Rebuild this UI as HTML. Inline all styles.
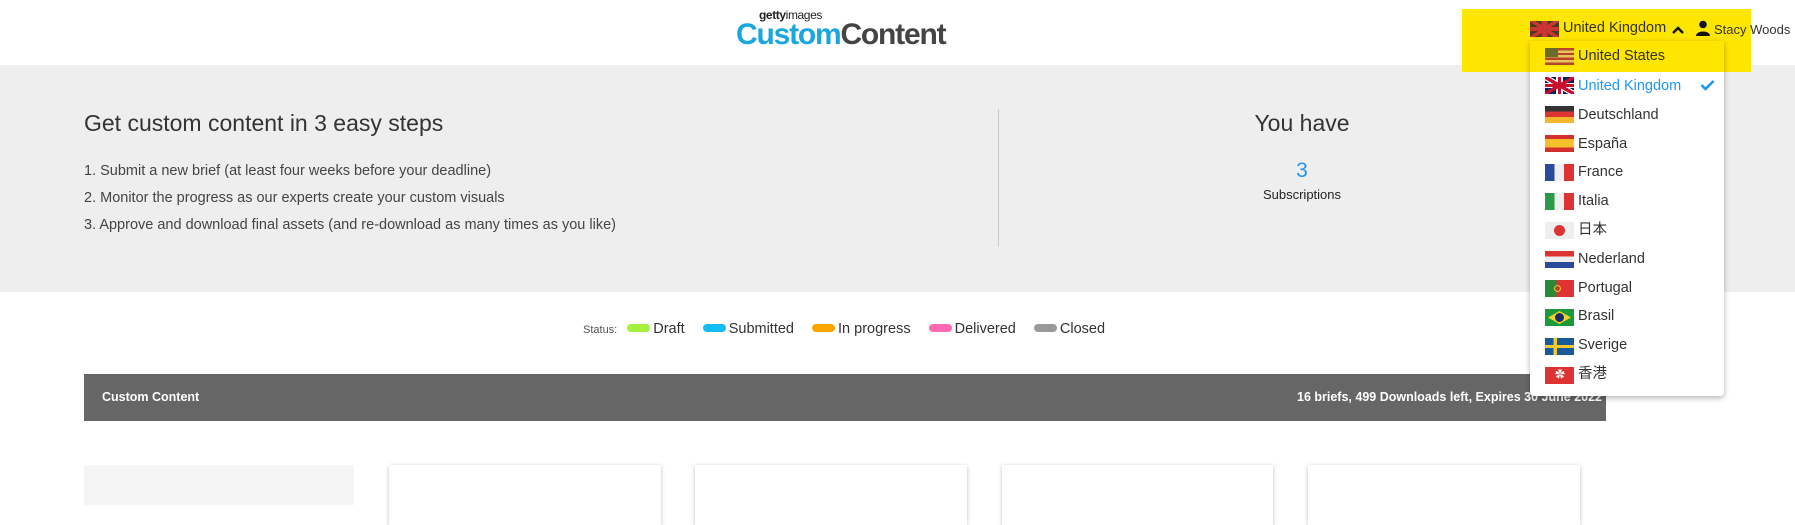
<!DOCTYPE html>
<html><head><meta charset="utf-8"><style>
*{margin:0;padding:0;box-sizing:border-box}
body{width:1795px;height:504px;overflow:hidden;background:#fff;font-family:"Liberation Sans","Noto Sans CJK JP",sans-serif;color:#333;position:relative}
.a{position:absolute;white-space:nowrap}
.gray{position:absolute;left:0;top:65px;width:1795px;height:227px;background:#eee}
.flag{position:absolute;width:29px;height:17px;overflow:hidden}
.item{position:absolute;left:1578px;font-size:14.5px;color:#333;line-height:18px}
.card{position:absolute;top:465px;height:60px;background:#fff;box-shadow:0 1px 4px rgba(0,0,0,.25)}
.dot{display:inline-block;width:23px;height:8px;border-radius:4px;margin-right:3px;vertical-align:1px}
</style></head><body>
<div class="a" style="left:759px;top:9px;font-size:12px;font-weight:bold;color:#222;letter-spacing:-.4px;line-height:13px">getty<span style="font-weight:normal">images</span></div>
<div class="a" style="left:736px;top:20px;font-size:30px;font-weight:bold;letter-spacing:-1.2px;line-height:30px"><span style="color:#1aa6df">Custom</span><span style="color:#444">Content</span></div>

<div class="gray"></div>
<div class="a" style="left:84px;top:110px;font-size:23px;color:#333">Get custom content in 3 easy steps</div>
<div class="a" style="left:84px;top:158px;font-size:14.5px;color:#444;line-height:27px">1. Submit a new brief (at least four weeks before your deadline)<br>2. Monitor the progress as our experts create your custom visuals<br>3. Approve and download final assets (and re-download as many times as you like)</div>
<div class="a" style="left:998px;top:109px;width:1px;height:138px;background:#ccc"></div>
<div class="a" style="left:1202px;width:200px;text-align:center;top:110px;font-size:23px;color:#333">You have</div>
<div class="a" style="left:1202px;width:200px;text-align:center;top:159px;font-size:21px;color:#2196f3">3</div>
<div class="a" style="left:1202px;width:200px;text-align:center;top:187px;font-size:13px;color:#222">Subscriptions</div>

<div class="a" style="left:583px;top:321px;font-size:14.5px;color:#333"><span style="font-size:11px;color:#555;margin-right:10px">Status:</span><span class="dot" style="background:#a4f13c"></span>Draft <span class="dot" style="background:#10bdf5;margin-left:14px"></span>Submitted <span class="dot" style="background:#ffa500;margin-left:14px"></span>In progress <span class="dot" style="background:#ff69b4;margin-left:14px"></span>Delivered <span class="dot" style="background:#999;margin-left:14px"></span>Closed</div>

<div class="a" style="left:84px;top:374px;width:1522px;height:47px;background:#666"></div>
<div class="a" style="left:102px;top:390px;font-size:12.5px;font-weight:bold;color:#fff">Custom Content</div>
<div class="a" style="left:1297px;width:290px;text-align:right;top:390px;font-size:12.5px;font-weight:bold;color:#fff">16 briefs, 499 Downloads left, Expires 30 June 2022</div>

<div class="a" style="left:84px;top:465px;width:270px;height:40px;background:#f5f5f5"></div>
<div class="card" style="left:389px;width:272px"></div>
<div class="card" style="left:695px;width:272px"></div>
<div class="card" style="left:1002px;width:271px"></div>
<div class="card" style="left:1308px;width:272px"></div>

<div class="a" style="left:1462px;top:9px;width:289px;height:63px;background:#ffe600"></div>
<div class="a" style="left:1530px;top:41px;width:194px;height:355px;background:#fff;box-shadow:0 2px 6px rgba(0,0,0,.3);border-radius:0 0 4px 4px"></div>
<div class="a" style="left:1530px;top:41px;width:194px;height:31px;background:#ffe600"></div>

<div class="flag" style="left:1530px;top:21px;height:16px;background:linear-gradient(33deg,transparent 44%,#c33 44%,#c33 56%,transparent 56%),linear-gradient(-33deg,transparent 44%,#c33 44%,#c33 56%,transparent 56%),linear-gradient(90deg,transparent 40%,#c33 40%,#c33 60%,transparent 60%),linear-gradient(0deg,transparent 38%,#c33 38%,#c33 62%,transparent 62%),#4a3a20"></div>
<div class="a" style="left:1563px;top:20px;font-size:14.5px;color:#333">United Kingdom</div>
<svg class="a" style="left:1671px;top:25px" width="14" height="10" viewBox="0 0 14 10"><path d="M2 8 L7 3 L12 8" stroke="#111" stroke-width="2.4" fill="none"/></svg>
<svg class="a" style="left:1695px;top:20px" width="16" height="16" viewBox="0 0 16 16"><circle cx="8" cy="4.5" r="3.8" fill="#111"/><path d="M1 16 C1 10 15 10 15 16Z" fill="#111"/></svg>
<div class="a" style="left:1714px;top:22px;font-size:13px;color:#333">Stacy Woods</div>

<div class="flag" style="left:1545px;top:48px;background:repeating-linear-gradient(#b8452a 0 2.4px,#e8c25a 2.4px 4.8px)"><div style="width:13px;height:9px;background:#6a6a2a"></div></div>
<div class="item" style="top:47px">United States</div>

<div class="flag" style="left:1545px;top:77px;background:linear-gradient(30deg,transparent 44%,#c8102e 44%,#c8102e 56%,transparent 56%),linear-gradient(-30deg,transparent 44%,#c8102e 44%,#c8102e 56%,transparent 56%),linear-gradient(90deg,transparent 38%,#fff 38%,#fff 44%,#c8102e 44%,#c8102e 56%,#fff 56%,#fff 62%,transparent 62%),linear-gradient(0deg,transparent 34%,#fff 34%,#fff 40%,#c8102e 40%,#c8102e 60%,#fff 60%,#fff 66%,transparent 66%),linear-gradient(30deg,#012169 40%,#fff 40%,#fff 60%,#012169 60%)"></div>
<div class="item" style="top:77px;color:#2196f3">United Kingdom</div>
<svg class="a" style="left:1700px;top:79px" width="15" height="12" viewBox="0 0 15 12"><path d="M1.5 6 L5.5 10 L13.5 2" stroke="#2196f3" stroke-width="2.6" fill="none"/></svg>

<div class="flag" style="left:1545px;top:106px;background:linear-gradient(#333 33%,#d33 33%,#d33 66%,#f5b82c 66%)"></div>
<div class="item" style="top:106px">Deutschland</div>

<div class="flag" style="left:1545px;top:135px;background:linear-gradient(#d32f2f 25%,#f5c02c 25%,#f5c02c 75%,#d32f2f 75%)"></div>
<div class="item" style="top:135px">España</div>

<div class="flag" style="left:1545px;top:164px;background:linear-gradient(90deg,#2a4a9a 33%,#eee 33%,#eee 66%,#d33 66%)"></div>
<div class="item" style="top:163px">France</div>

<div class="flag" style="left:1545px;top:193px;background:linear-gradient(90deg,#2a9a4a 33%,#eee 33%,#eee 66%,#d33 66%)"></div>
<div class="item" style="top:192px">Italia</div>

<div class="flag" style="left:1545px;top:222px;background:#eee"><div style="position:absolute;left:9px;top:3px;width:11px;height:11px;border-radius:50%;background:#d33"></div></div>
<div class="item" style="top:221px">日本</div>

<div class="flag" style="left:1545px;top:251px;background:linear-gradient(#d33 33%,#eee 33%,#eee 66%,#2a4a9a 66%)"></div>
<div class="item" style="top:250px">Nederland</div>

<div class="flag" style="left:1545px;top:280px;background:linear-gradient(90deg,#2a8a3a 40%,#d33 40%)"><div style="position:absolute;left:9px;top:5px;width:7px;height:7px;border-radius:50%;border:1.5px solid #f5c02c"></div></div>
<div class="item" style="top:279px">Portugal</div>

<div class="flag" style="left:1545px;top:309px;background:#1a9a3a"><div style="position:absolute;left:3px;top:2px;width:23px;height:13px;background:#f5d02c;clip-path:polygon(50% 0,100% 50%,50% 100%,0 50%)"></div><div style="position:absolute;left:10px;top:4px;width:9px;height:9px;border-radius:50%;background:#1a2a6a"></div></div>
<div class="item" style="top:307px">Brasil</div>

<div class="flag" style="left:1545px;top:338px;background:linear-gradient(90deg,transparent 30%,#f5c82c 30%,#f5c82c 42%,transparent 42%),linear-gradient(#1a5a9a 40%,#f5c82c 40%,#f5c82c 60%,#1a5a9a 60%)"></div>
<div class="item" style="top:336px">Sverige</div>

<div class="flag" style="left:1545px;top:367px;background:#d33"><div style="position:absolute;left:10px;top:4px;color:#fff;font-size:10px;line-height:10px">✿</div></div>
<div class="item" style="top:365px">香港</div>
</body></html>
